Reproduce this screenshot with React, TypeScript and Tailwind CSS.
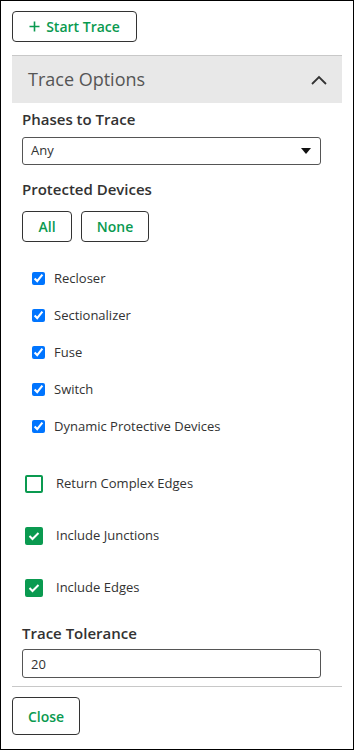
import React, { useState } from "react";

const GREEN = "text-[#0a9a50]";

function BigCheck({ checked, label }: { checked: boolean; label: string }) {
  return (
    <div className="flex items-center h-[52px]">
      <div
        className={
          "ml-[3px] w-[18px] h-[18px] rounded-[2px] border-2 border-[#0a9a50] flex items-center justify-center " +
          (checked ? "bg-[#0a9a50]" : "bg-white")
        }
      >
        {checked && (
          <svg width="12" height="10" viewBox="0 0 12 10">
            <path d="M1.5 5 L4.5 8 L10.5 2" stroke="white" strokeWidth="2" fill="none" />
          </svg>
        )}
      </div>
      <span className="ml-[13px] text-[13px] text-[#323232]">{label}</span>
    </div>
  );
}

export default function App() {
  const devices = ["Recloser", "Sectionalizer", "Fuse", "Switch", "Dynamic Protective Devices"];
  const [val, setVal] = useState("20");
  return (
    <div
      className="w-[354px] h-[750px] border border-black bg-white flex flex-col pl-[11px] pr-[11px]"
      style={{ fontFamily: '"Segoe UI", "Open Sans", sans-serif' }}
    >
      <button
        className={`mt-[10px] w-[125px] h-[31px] border border-[#333] rounded-[4px] flex items-center justify-center gap-[6px] text-[14px] font-semibold ${GREEN}`}
      >
        <svg width="11" height="11" viewBox="0 0 11 11">
          <path d="M5.5 0.5 V10.5 M0.5 5.5 H10.5" stroke="#0a9a50" strokeWidth="1.6" />
        </svg>
        <span>Start Trace</span>
      </button>

      <div className="mt-[13px] h-[48px] border-t border-[#c8c8c8] bg-[#e8e8e8] flex items-center justify-between pl-[16px] pr-[15px]">
        <span className="text-[18px] text-[#555]">Trace Options</span>
        <svg width="16" height="10" viewBox="0 0 16 10">
          <path d="M1 9 L8 2 L15 9" stroke="#333" strokeWidth="1.8" fill="none" />
        </svg>
      </div>

      <div className="pl-[10px] pr-[21px] flex flex-col">
        <div className="mt-[6px] h-[20px] text-[15px] font-semibold text-[#323232] leading-[20px]">Phases to Trace</div>
        <div className="mt-[8px] h-[28px] border border-[#555] rounded-[3px] flex items-center justify-between pl-[8px] pr-[9px]">
          <span className="text-[13px] text-[#323232]">Any</span>
          <svg width="10" height="6" viewBox="0 0 10 6">
            <path d="M0 0 H10 L5 6 Z" fill="#111" />
          </svg>
        </div>
        <div className="mt-[14px] h-[20px] text-[15px] font-semibold text-[#323232] leading-[20px]">Protected Devices</div>
        <div className="mt-[12px] flex gap-[9px]">
          <button className={`w-[50px] h-[31px] border border-[#333] rounded-[4px] text-[14px] font-semibold ${GREEN}`}>All</button>
          <button className={`w-[68px] h-[31px] border border-[#333] rounded-[4px] text-[14px] font-semibold ${GREEN}`}>None</button>
        </div>
        <div className="mt-[18px] flex flex-col">
          {devices.map((d) => (
            <label key={d} className="flex items-center h-[37px]">
              <input type="checkbox" defaultChecked className="ml-[10px] w-[13px] h-[13px] m-0 accent-[#0075ff]" />
              <span className="ml-[9px] text-[13px] text-[#323232]">{d}</span>
            </label>
          ))}
        </div>
        <div className="mt-[13px] flex flex-col">
          <BigCheck checked={false} label="Return Complex Edges" />
          <BigCheck checked={true} label="Include Junctions" />
          <BigCheck checked={true} label="Include Edges" />
        </div>
        <div className="mt-[9px] h-[20px] text-[15px] font-semibold text-[#323232] leading-[20px]">Trace Tolerance</div>
        <input
          value={val}
          onChange={(e) => setVal(e.target.value)}
          className="mt-[6px] h-[29px] border border-[#555] rounded-[3px] pl-[8px] text-[13px] text-[#323232] outline-none"
        />
      </div>

      <div className="mt-[8px] border-t border-[#c8c8c8]" />
      <button className={`mt-[10px] w-[68px] h-[38px] border border-[#333] rounded-[4px] text-[14px] font-semibold ${GREEN}`}>Close</button>
    </div>
  );
}
